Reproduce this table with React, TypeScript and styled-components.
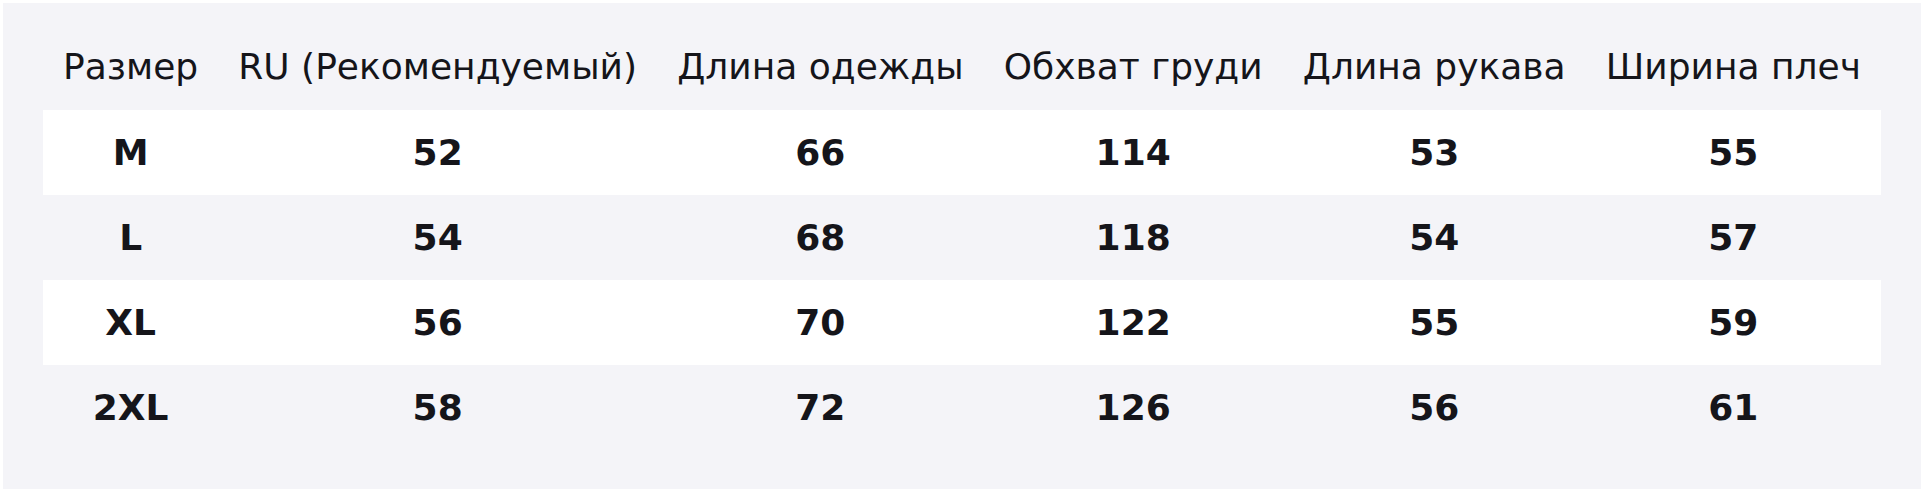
import styled, { createGlobalStyle } from "styled-components";

const GlobalStyle = createGlobalStyle`
    html, body {
        margin: 0;
        padding: 0;
        background: #ffffff;
    }
    body {
        font-family: "DejaVu Sans", "Noto Sans", sans-serif;
        color: #15151a;
    }
`

const Page = styled.div`
    padding: 3px;
`

const Panel = styled.div`
    background-color: #f4f4f8;
    padding: 20px 40px 39px;
`

const Table = styled.div`
    display: grid;
    grid-template-columns: repeat(6, auto);
`

const Row = styled.div<{ $striped?: boolean; $head?: boolean }>`
    grid-column: 1 / -1;
    display: grid;
    grid-template-columns: subgrid;
    height: ${p => (p.$head ? "87px" : "85px")};
    background-color: ${p => (p.$striped ? "#ffffff" : "transparent")};
`

const Cell = styled.div<{ $head?: boolean }>`
    display: flex;
    align-items: center;
    justify-content: center;
    white-space: nowrap;
    font-size: 36px;
    font-weight: ${p => (p.$head ? 400 : 700)};
    color: #15151a;
`

const headers = [
    "Размер",
    "RU (Рекомендуемый)",
    "Длина одежды",
    "Обхват груди",
    "Длина рукава",
    "Ширина плеч",
];

const sizes = [
    ["M", "52", "66", "114", "53", "55"],
    ["L", "54", "68", "118", "54", "57"],
    ["XL", "56", "70", "122", "55", "59"],
    ["2XL", "58", "72", "126", "56", "61"],
];

const App = () => {
    return (
        <Page>
            <GlobalStyle />
            <Panel>
                <Table>
                    <Row $head>
                        {headers.map(h => (
                            <Cell $head key={h}>{h}</Cell>
                        ))}
                    </Row>
                    {sizes.map((row, rowIndex) => (
                        <Row key={row[0]} $striped={rowIndex % 2 === 0}>
                            {row.map((value, colIndex) => (
                                <Cell key={colIndex}>{value}</Cell>
                            ))}
                        </Row>
                    ))}
                </Table>
            </Panel>
        </Page>
    )
}

export default App
